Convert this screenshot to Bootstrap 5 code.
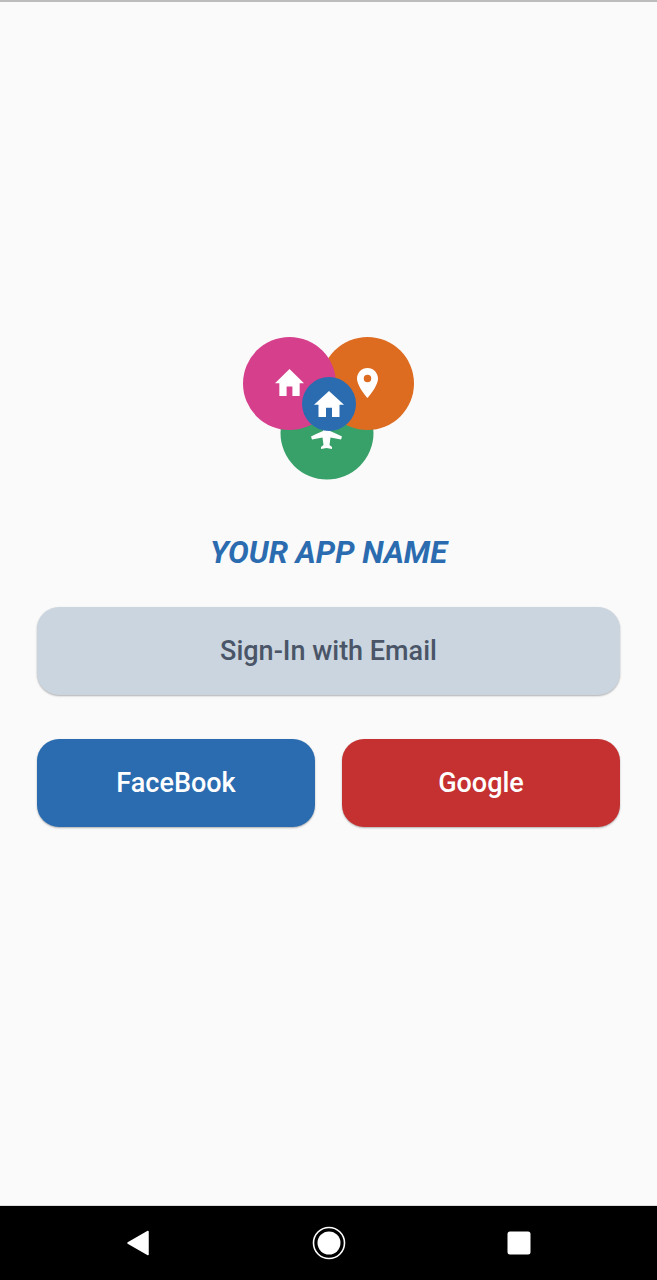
<!DOCTYPE html>
<html lang="en">
<head>
  <meta charset="UTF-8">
  <title>Your App Name</title>
  <link href="https://cdn.jsdelivr.net/npm/bootstrap@5.3.2/dist/css/bootstrap.min.css" rel="stylesheet" />
  <style>
    body {
      background: #fafafa;
      font-family: Roboto, sans-serif;
    }
    .app-screen {
      height: 1280px;
      border-top: 2px solid #bcbcbc;
    }
    .app-main {
      padding: 335px 37px 0;
    }
    .app-logo {
      display: block;
      margin-left: 206px;
    }
    .app-title {
      margin: 52px 0 0;
      color: #2b6cb0;
      font-size: 31px;
      line-height: 40px;
      font-weight: 700;
      font-style: italic;
      text-align: center;
    }
    .app-btn {
      height: 88px;
      border: 0;
      border-radius: 22px;
      font-size: 27px;
      font-weight: 500;
      box-shadow: 0 1px 2px rgba(0,0,0,0.3);
    }
    .btn-email, .btn-email:hover { background: #cbd5e0; color: #4a5568; }
    .btn-fb, .btn-fb:hover { background: #2b6cb0; color: #fff; }
    .btn-google, .btn-google:hover { background: #c53030; color: #fff; }
    .email-row { margin-top: 34px; }
    .social-row { margin-top: 44px; gap: 27px; }
    .android-nav {
      height: 75px;
      background: #000;
      border-top: 1px solid #ddd;
    }
    .nav-slot { width: 190px; }
  </style>
</head>
<body>

<div class="app-screen d-flex flex-column">
  <div class="app-main flex-grow-1">
    <svg class="app-logo" width="172" height="144" viewBox="0 0 172 144">
      <circle cx="84" cy="96" r="46.5" fill="#38a169"/>
      <circle cx="124.5" cy="46.5" r="46.5" fill="#dd6b20"/>
      <circle cx="46.5" cy="46.5" r="46.5" fill="#d53f8c"/>
      <!-- pink house -->
      <path transform="translate(29.1 27.2) scale(1.45 1.59)" fill="#fff" d="M10 20v-6h4v6h5v-8h3L12 3 2 12h3v8z"/>
      <!-- pin -->
      <path transform="translate(106.5 28) scale(1.5)" fill="#fff" fill-rule="evenodd" d="M12 2C8.13 2 5 5.13 5 9c0 5.25 7 13 7 13s7-7.75 7-13c0-3.87-3.13-7-7-7zm0 9.5a2.5 2.5 0 010-5 2.5 2.5 0 010 5z"/>
      <!-- plane -->
      <path fill="#fff" d="M80 88V94Q74 96.500 68 99.500L69 102.500 79.500 100.500 80.500 108 78 110V112L83.500 111 89 112V110L86.500 108 87.500 100.500 98 102.500 99 99.500Q93 96.500 87 94V88z"/>
      <circle cx="86" cy="67" r="27" fill="#2b6cb0"/>
      <path transform="translate(68 49.4) scale(1.5 1.53)" fill="#fff" d="M10 20v-6h4v6h5v-8h3L12 3 2 12h3v8z"/>
    </svg>

    <h1 class="app-title">YOUR APP NAME</h1>

    <div class="email-row d-flex">
      <button class="btn app-btn btn-email w-100">Sign-In with Email</button>
    </div>
    <div class="social-row d-flex">
      <button class="btn app-btn btn-fb flex-fill w-50">FaceBook</button>
      <button class="btn app-btn btn-google flex-fill w-50">Google</button>
    </div>
  </div>

  <div class="android-nav d-flex justify-content-center align-items-center flex-shrink-0">
    <div class="nav-slot d-flex justify-content-center">
      <svg width="26" height="26" viewBox="0 0 26 26"><path fill="#fff" stroke="#fff" stroke-width="1.5" stroke-linejoin="round" d="M22 1.500v23L2 13z"/></svg>
    </div>
    <div class="nav-slot d-flex justify-content-center">
      <svg width="34" height="34" viewBox="0 0 34 34"><circle cx="17" cy="17" r="15.500" fill="none" stroke="#fff" stroke-width="1.6"/><circle cx="17" cy="17" r="11.500" fill="#fff"/></svg>
    </div>
    <div class="nav-slot d-flex justify-content-center">
      <svg width="24" height="24" viewBox="0 0 24 24"><rect x="0.5" y="0.5" width="23" height="23" rx="2.5" fill="#fff"/></svg>
    </div>
  </div>
</div>

<script src="https://cdn.jsdelivr.net/npm/bootstrap@5.3.2/dist/js/bootstrap.bundle.min.js"></script>
</body>
</html>
